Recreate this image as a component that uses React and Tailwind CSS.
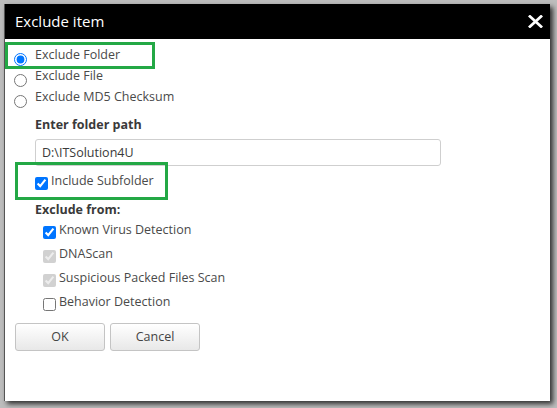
import { useState } from "react"

const font = { fontFamily: '"Open Sans", "Noto Sans", sans-serif' }

function CloseIcon() {
  return (
    <svg width="15" height="13" viewBox="0 0 15 13">
      <path d="M2 1.5 L13 11.5 M13 1.5 L2 11.5" stroke="white" strokeWidth="2.8" strokeLinecap="square" />
    </svg>
  )
}

const radios = ["Exclude Folder", "Exclude File", "Exclude MD5 Checksum"]

const scans = [
  { label: "Known Virus Detection", checked: true, disabled: false },
  { label: "DNAScan", checked: true, disabled: true },
  { label: "Suspicious Packed Files Scan", checked: true, disabled: true },
  { label: "Behavior Detection", checked: false, disabled: false },
]

export default function App() {
  const [type, setType] = useState(0)
  const [path, setPath] = useState("D:\\ITSolution4U")
  const [subfolder, setSubfolder] = useState(true)

  return (
    <div className="w-[557px] h-[408px] bg-[#bdbdbd] pl-[4px] pt-[4px] overflow-hidden" style={font}>
      <div className="relative w-[546px] h-[397px] bg-white border-l border-[#555] shadow-[3px_3px_5px_rgba(0,0,0,0.75)]">
        {/* Header */}
        <div className="h-[35px] bg-black flex items-center justify-between pl-[10px] pr-[7px]">
          <span className="text-white text-[15px] leading-none">Exclude item</span>
          <CloseIcon />
        </div>

        {/* Body */}
        <div className="pt-[7px] pl-[9px] text-[12.5px] text-[#4a4a4a]">
          {radios.map((r, i) => (
            <label key={r} className="h-[21px] flex items-start">
              <input
                type="radio"
                name="type"
                checked={type === i}
                onChange={() => setType(i)}
                className="w-[13px] h-[13px] mt-[7px]"
              />
              <span className="ml-[8px] leading-[18px]">{r}</span>
            </label>
          ))}

          <div className="pl-[21px]">
            <div className="mt-[7px] leading-[18px] font-bold text-[#3a3a3a]">Enter folder path</div>
            <input
              value={path}
              onChange={(e) => setPath(e.target.value)}
              className="mt-[5px] w-[406px] h-[27px] border border-[#cfcfcf] rounded-[3px] px-[6px] text-[12.5px] text-[#3a3a3a] outline-none"
            />

            <label className="mt-[6px] flex items-start">
              <input
                type="checkbox"
                checked={subfolder}
                onChange={(e) => setSubfolder(e.target.checked)}
                className="w-[13px] h-[13px] mt-[5px]"
              />
              <span className="ml-[3px] leading-[18px]">Include Subfolder</span>
            </label>

            <div className="mt-[11px] leading-[18px] font-bold text-[#3a3a3a]">Exclude from:</div>

            <div className="pl-[8px] pt-[2px]">
              {scans.map((s) => (
                <label key={s.label} className="h-[24px] flex items-start">
                  <input
                    type="checkbox"
                    defaultChecked={s.checked}
                    disabled={s.disabled}
                    className="w-[13px] h-[13px] mt-[5px]"
                  />
                  <span className="ml-[3px] leading-[18px]">{s.label}</span>
                </label>
              ))}
            </div>
          </div>

          <div className="mt-[6px] flex gap-[5px] ml-[1px]">
            <button className="w-[90px] h-[28px] rounded-[3px] border border-[#c4c4c4] bg-gradient-to-b from-white to-[#e8e8e8] text-[12.5px] text-[#444]">
              OK
            </button>
            <button className="w-[90px] h-[28px] rounded-[3px] border border-[#c4c4c4] bg-gradient-to-b from-white to-[#e8e8e8] text-[12.5px] text-[#444]">
              Cancel
            </button>
          </div>
        </div>

        {/* Annotation boxes */}
        <div className="absolute left-0 top-[38px] w-[150px] h-[27px] border-[3px] border-[#23a845] pointer-events-none" />
        <div className="absolute left-[10px] top-[158px] w-[153px] h-[38px] border-[3px] border-[#23a845] pointer-events-none" />
      </div>
    </div>
  )
}
